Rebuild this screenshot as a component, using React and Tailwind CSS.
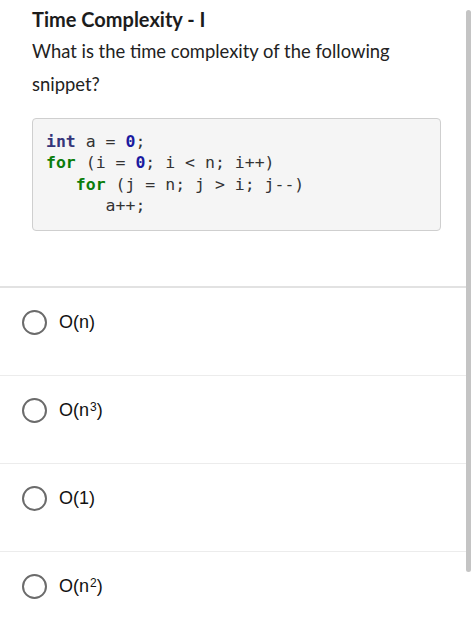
import React from 'react';

const Sup = ({ children }) => <sup className="text-[12px] relative -top-[5px] ml-[1px]">{children}</sup>;

const options = [
  { id: 'a', label: <>O(n)</> },
  { id: 'b', label: <>O(n<Sup>3</Sup>)</> },
  { id: 'c', label: <>O(1)</> },
  { id: 'd', label: <>O(n<Sup>2</Sup>)</> },
];

const Kw = ({ children }) => <span className="text-[#0b7d0b] font-bold">{children}</span>;
const Num = ({ children }) => <span className="text-[#1a1aa0] font-bold">{children}</span>;

const App = () => {
  return (
    <div className="relative w-[474px] h-[623px] bg-white overflow-hidden text-[#1a1a1a]">
      <div className="w-[466px]">
        <div className="pl-8 pr-[25px] pt-[5px]">
          <h1 className="font-['Lato','Liberation_Sans',sans-serif] font-bold text-[20px] leading-[28px] text-[#1c1c1c]">
            Time Complexity - I
          </h1>
          <p className="mt-[2px] font-['Lato','Liberation_Sans',sans-serif] text-[18.4px] leading-[33px] text-[#222]">
            What is the time complexity of the following snippet?
          </p>
          <pre className="mt-[17px] bg-[#f5f5f5] border border-[#cfcfcf] rounded-[4px] px-[13px] pt-3 pb-[14px] font-['DejaVu_Sans_Mono',monospace] text-[16.5px] leading-[21.3px] text-[#333]">
            <span className="text-[#35357a] font-bold">int</span> a = <Num>0</Num>;{'\n'}
            <Kw>for</Kw> (i = <Num>0</Num>; i &lt; n; i++){'\n'}
            {'   '}<Kw>for</Kw> (j = n; j &gt; i; j--){'\n'}
            {'      '}a++;
          </pre>
        </div>

        <div className="mt-[55px] border-t-2 border-[#e2e2e2]">
          {options.map((o, i) => (
            <div
              key={o.id}
              className={`h-[88px] flex items-start pt-[22px] pl-[22px] gap-[12px] ${i < options.length - 1 ? 'border-b border-[#ececec]' : ''}`}
            >
              <span className="w-[25px] h-[25px] rounded-full border-2 border-[#6b6b6b] shrink-0" />
              <span className="font-['Liberation_Sans',Arial,sans-serif] text-[18px] leading-[25px] text-[#111]">
                {o.label}
              </span>
            </div>
          ))}
        </div>
      </div>

      <div className="absolute left-[466px] top-[10px] w-[5px] h-[562px] rounded-full bg-[#c4c4c4]" />
    </div>
  );
};

export default App;
